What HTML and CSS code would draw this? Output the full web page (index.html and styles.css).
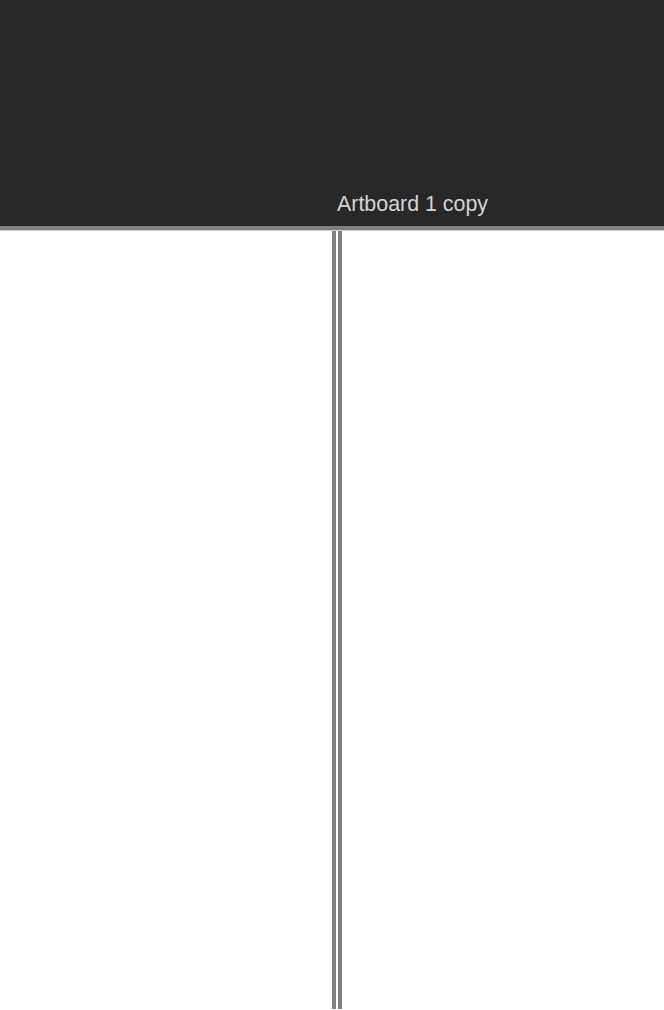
FILE: index.html
```html
<!DOCTYPE html>
<html>
<head>
<meta charset="utf-8">
<link rel="stylesheet" href="styles.css">
</head>
<body>
<div class="page">
  <header class="top">
    <span class="title">Artboard 1 copy</span>
  </header>
  <div class="rule"></div>
  <main class="canvas">
    <div class="divider">
      <div class="bar"></div>
      <div class="bar"></div>
    </div>
  </main>
</div>
</body>
</html>
```
FILE: styles.css
```css
html, body {
  margin: 0;
  padding: 0;
  background: #ffffff;
}
.page {
  display: flex;
  flex-direction: column;
  height: 1010px;
}
.top {
  height: 226px;
  background: #282828;
  display: flex;
  align-items: flex-end;
  padding-left: 337px;
  box-sizing: border-box;
  padding-bottom: 10px;
}
.title {
  font-family: "Liberation Sans", Arial, sans-serif;
  font-size: 21.4px;
  line-height: 24px;
  color: #d4d4d4;
}
.rule {
  height: 4px;
  background: #7f7f7f;
  border-bottom: 1px solid #cfcfcf;
}
.canvas {
  flex: 1;
  display: flex;
  padding-left: 332px;
  padding-bottom: 1px;
}
.divider {
  display: flex;
  gap: 2px;
}
.bar {
  width: 4px;
  background: #7f7f7f;
}
```
